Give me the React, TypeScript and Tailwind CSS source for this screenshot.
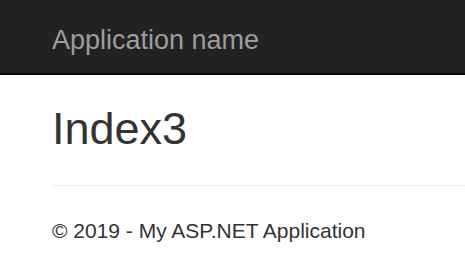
export default function App() {
  return (
    <div className="min-h-screen bg-white font-['Liberation_Sans',Arial,sans-serif] text-[#333333]">
      <nav className="box-border h-[75px] border-b-2 border-[#080808] bg-[#222222]">
        <div className="pl-[52px] pt-[25px]">
          <a href="#" className="block text-[27px] leading-[30px] text-[#9d9d9d] no-underline">
            Application name
          </a>
        </div>
      </nav>
      <div className="pl-[52px]">
        <h2 className="pt-[28.5px] text-[45px] font-normal leading-[49.5px]">Index3</h2>
        <hr className="mt-[31.5px] mb-[30px] border-0 border-t-[1.5px] border-[#eeeeee]" />
        <footer>
          <p className="text-[21px] leading-[30px]">© 2019 - My ASP.NET Application</p>
        </footer>
      </div>
    </div>
  );
}
